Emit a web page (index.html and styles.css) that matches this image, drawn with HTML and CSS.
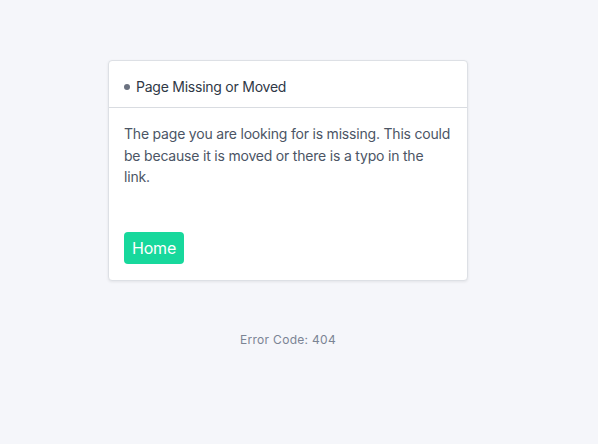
FILE: index.html
```html
<!DOCTYPE html>
<html>
<head>
<meta charset="utf-8">
<link rel="stylesheet" href="styles.css">
</head>
<body>
<main class="page">
  <section class="card">
    <header class="card-header">
      <span class="dot"></span>
      <span class="title">Page Missing or Moved</span>
    </header>
    <div class="card-body">
      <p class="message">The page you are looking for is missing. This could be because it is moved or there is a typo in the link.</p>
      <a class="btn" href="#">Home</a>
    </div>
  </section>
  <p class="code">Error Code: 404</p>
</main>
</body>
</html>
```
FILE: styles.css
```css
html, body {
  margin: 0;
  padding: 0;
  background: #f5f6fa;
  font-family: Inter, "Noto Sans", sans-serif;
}
.page {
  width: 576px;
  display: flex;
  flex-direction: column;
  align-items: center;
  padding-top: 60px;
}
.card {
  width: 360px;
  box-sizing: border-box;
  background: #fff;
  border: 1px solid #dde0e5;
  border-radius: 4px;
  box-shadow: 0 1px 3px rgba(0,0,0,0.08);
}
.card-header {
  height: 47px;
  box-sizing: border-box;
  display: flex;
  align-items: center;
  gap: 6px;
  padding: 5px 16px 0 15px;
  border-bottom: 1px solid #d9dce1;
}
.dot {
  width: 6px;
  height: 6px;
  border-radius: 50%;
  background: #6b7280;
}
.title {
  font-size: 14px;
  letter-spacing: -0.24px;
  color: #2f3846;
}
.card-body {
  padding: 15px 15px 16px 15px;
}
.message {
  margin: 0 0 44px 0;
  font-size: 14px;
  letter-spacing: -0.2px;
  line-height: 21.5px;
  color: #4b5565;
}
.btn {
  display: inline-block;
  height: 32px;
  line-height: 32px;
  padding: 0 8px;
  border-radius: 4px;
  background: #17d89c;
  color: #fff;
  font-size: 16px;
  letter-spacing: -0.2px;
  text-decoration: none;
}
.code {
  margin: 51px 0 0 0;
  font-size: 12px;
  color: #7b8494;
  letter-spacing: 0.3px;
}
```
